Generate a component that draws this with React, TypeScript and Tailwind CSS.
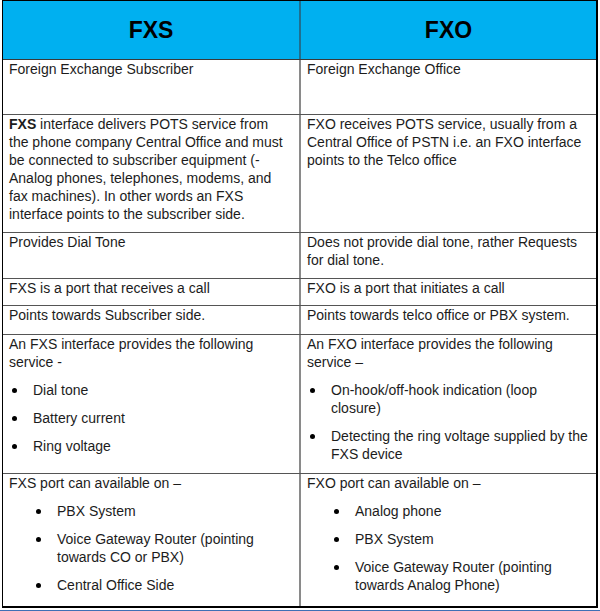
const font = { fontFamily: '"Liberation Sans", Arial, sans-serif' };

function Bullets({ items, indent }: { items: React.ReactNode[]; indent: 'near' | 'far' }) {
  return (
    <ul className="mt-[10px] flex flex-col gap-[10px]">
      {items.map((it, i) => (
        <li key={i} className={`flex ${indent === 'near' ? 'pl-[3px]' : 'pl-[27px]'}`}>
          <span className="w-[21px] shrink-0 pt-[7px]">
            <span className="block w-[5px] h-[5px] rounded-full bg-black" />
          </span>
          <span>{it}</span>
        </li>
      ))}
    </ul>
  );
}

type Row = { h: string; left: React.ReactNode; right: React.ReactNode };

const rows: Row[] = [
  { h: 'h-[55px]', left: 'Foreign Exchange Subscriber', right: 'Foreign Exchange Office' },
  {
    h: 'h-[118px]',
    left: (
      <p>
        <b>FXS</b> interface delivers POTS service from the phone company Central Office and must be
        connected to subscriber equipment (- Analog phones, telephones, modems, and fax machines). In
        other words an FXS interface points to the subscriber side.
      </p>
    ),
    right: 'FXO receives POTS service, usually from a Central Office of PSTN i.e. an FXO interface points to the Telco office',
  },
  { h: 'h-[46px]', left: 'Provides Dial Tone', right: 'Does not provide dial tone, rather Requests for dial tone.' },
  { h: 'h-[27px]', left: 'FXS is a port that receives a call', right: 'FXO is a port that initiates a call' },
  { h: 'h-[29px]', left: 'Points towards Subscriber side.', right: 'Points towards telco office or PBX system.' },
  {
    h: 'h-[139px]',
    left: (
      <>
        <p>An FXS interface provides the following service -</p>
        <Bullets indent="near" items={['Dial tone', 'Battery current', 'Ring voltage']} />
      </>
    ),
    right: (
      <>
        <p>An FXO interface provides the following service –</p>
        <Bullets
          indent="near"
          items={[
            <>
              On-hook/off-hook indication (loop
              <br />
              closure)
            </>,
            'Detecting the ring voltage supplied by the FXS device',
          ]}
        />
      </>
    ),
  },
  {
    h: 'h-[132px]',
    left: (
      <>
        <p>FXS port can available on –</p>
        <Bullets
          indent="far"
          items={['PBX System', 'Voice Gateway Router (pointing towards CO or PBX)', 'Central Office Side']}
        />
      </>
    ),
    right: (
      <>
        <p>FXO port can available on –</p>
        <Bullets
          indent="far"
          items={['Analog phone', 'PBX System', 'Voice Gateway Router (pointing towards Analog Phone)']}
        />
      </>
    ),
  },
];

export default function App() {
  return (
    <div className="w-[600px] h-[611px] bg-white overflow-hidden" style={font}>
      <div className="ml-[2px] w-[596px] border-t border-l border-black border-r-2 border-b-2">
        <div className="grid grid-cols-[298px_1fr] h-[59px] bg-[#00b0f0] border-b border-[#3a3a3a]">
          <div className="flex items-center justify-center border-r-2 border-[#1f6f90] text-[23px] font-bold text-black">
            FXS
          </div>
          <div className="flex items-center justify-center text-[23px] font-bold text-black">FXO</div>
        </div>
        {rows.map((r, i) => (
          <div
            key={i}
            className={`grid grid-cols-[298px_1fr] ${r.h} ${i < rows.length - 1 ? 'border-b border-[#555]' : ''} text-[14px] leading-[18px] text-[#1c1c1c]`}
          >
            <div className="border-r-2 border-[#8a8a8a] pl-[6px] pr-[12px]">{r.left}</div>
            <div className="pl-[6px] pr-[4px]">{r.right}</div>
          </div>
        ))}
      </div>
      <div className="mt-[2px] h-[2px] bg-[#3f6fb5]" />
    </div>
  );
}
